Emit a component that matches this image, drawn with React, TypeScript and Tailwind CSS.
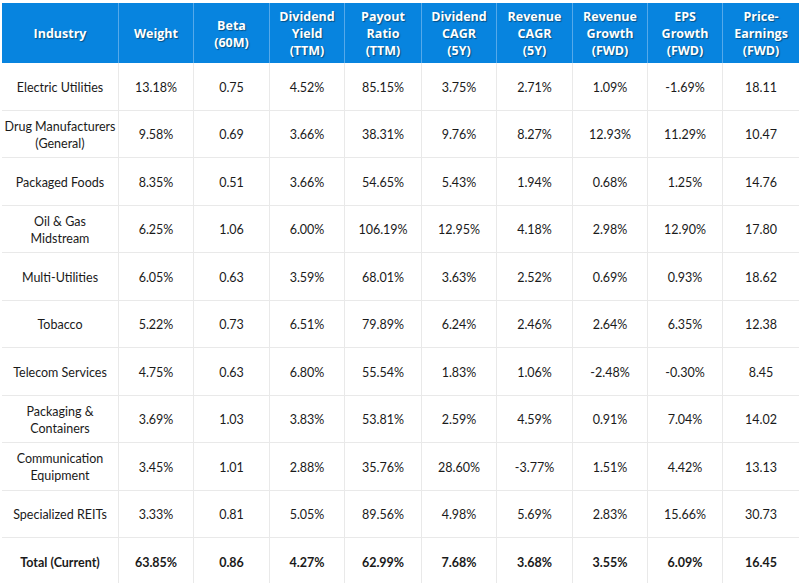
const headers = [
  ["Industry"],
  ["Weight"],
  ["Beta", "(60M)"],
  ["Dividend", "Yield", "(TTM)"],
  ["Payout", "Ratio", "(TTM)"],
  ["Dividend", "CAGR", "(5Y)"],
  ["Revenue", "CAGR", "(5Y)"],
  ["Revenue", "Growth", "(FWD)"],
  ["EPS", "Growth", "(FWD)"],
  ["Price-", "Earnings", "(FWD)"],
];

const rows: string[][] = [
  ["Electric Utilities", "13.18%", "0.75", "4.52%", "85.15%", "3.75%", "2.71%", "1.09%", "-1.69%", "18.11"],
  ["Drug Manufacturers\n(General)", "9.58%", "0.69", "3.66%", "38.31%", "9.76%", "8.27%", "12.93%", "11.29%", "10.47"],
  ["Packaged Foods", "8.35%", "0.51", "3.66%", "54.65%", "5.43%", "1.94%", "0.68%", "1.25%", "14.76"],
  ["Oil & Gas\nMidstream", "6.25%", "1.06", "6.00%", "106.19%", "12.95%", "4.18%", "2.98%", "12.90%", "17.80"],
  ["Multi-Utilities", "6.05%", "0.63", "3.59%", "68.01%", "3.63%", "2.52%", "0.69%", "0.93%", "18.62"],
  ["Tobacco", "5.22%", "0.73", "6.51%", "79.89%", "6.24%", "2.46%", "2.64%", "6.35%", "12.38"],
  ["Telecom Services", "4.75%", "0.63", "6.80%", "55.54%", "1.83%", "1.06%", "-2.48%", "-0.30%", "8.45"],
  ["Packaging &\nContainers", "3.69%", "1.03", "3.83%", "53.81%", "2.59%", "4.59%", "0.91%", "7.04%", "14.02"],
  ["Communication\nEquipment", "3.45%", "1.01", "2.88%", "35.76%", "28.60%", "-3.77%", "1.51%", "4.42%", "13.13"],
  ["Specialized REITs", "3.33%", "0.81", "5.05%", "89.56%", "4.98%", "5.69%", "2.83%", "15.66%", "30.73"],
];

const total = ["Total (Current)", "63.85%", "0.86", "4.27%", "62.99%", "7.68%", "3.68%", "3.55%", "6.09%", "16.45"];

const cols = "grid grid-cols-[116px_75px_76px_75px_77px_75px_76px_75px_75px_77px]";

function Row({ cells, bold }: { cells: string[]; bold?: boolean }) {
  return (
    <div className={`${cols} h-[47.5px] border-b border-[#e9e9e9]`}>
      {cells.map((c, i) => (
        <div
          key={i}
          className={`flex items-center justify-center pt-[2px] text-center whitespace-pre-line leading-[17px] ${
            i > 0 ? "border-l border-[#e9e9e9]" : ""
          } ${bold ? "font-bold" : ""}`}
        >
          {c}
        </div>
      ))}
    </div>
  );
}

export default function App() {
  return (
    <div className="w-[800px] h-[583px] overflow-hidden bg-white pt-[3px] pl-[2px]">
      <div className="w-[797px] text-[#1a1a1a]">
        <div className="h-[60px] bg-[#0784df] text-white font-['Open_Sans',sans-serif] font-bold text-[12.5px] leading-[17px] [text-shadow:1px_1px_1px_rgba(0,0,0,0.4)]">
          <div className={`${cols} h-full`}>
            {headers.map((h, i) => (
              <div
                key={i}
                className={`flex flex-col items-center justify-center pt-[1px] text-center ${i > 0 ? "border-l border-[#55a9ea]" : ""}`}
              >
                {h.map((l) => (
                  <span key={l}>{l}</span>
                ))}
              </div>
            ))}
          </div>
        </div>
        <div className="font-['Lato',sans-serif] text-[12.5px]">
          {rows.map((r, i) => (
            <Row key={i} cells={r} />
          ))}
          <Row cells={total} bold />
        </div>
      </div>
    </div>
  );
}
